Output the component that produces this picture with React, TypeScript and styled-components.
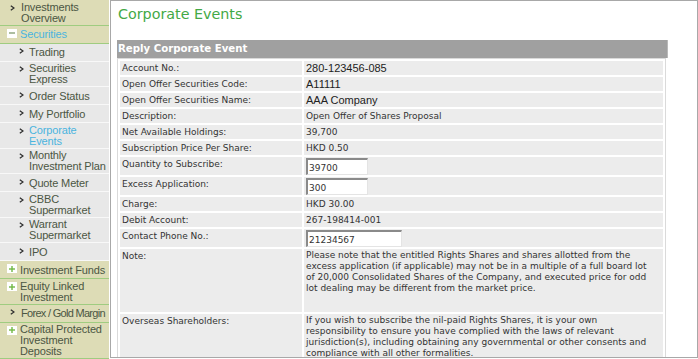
import React from "react";
import styled, { createGlobalStyle, css } from "styled-components";

const Global = createGlobalStyle`
  html, body { margin: 0; padding: 0; background: #fff; }
  body { width: 698px; height: 359px; overflow: hidden; }
`;

const Frame = styled.div`
  display: flex;
  width: 698px;
  height: 359px;
  background: #fff;
  font-family: "DejaVu Sans", Verdana, sans-serif;
`;

const Sidebar = styled.nav`
  width: 109px;
  margin-right: 1px;
  background: #e8e8e8;
  display: flex;
  flex-direction: column;
  overflow: hidden;
`;

type Level = "top" | "sub";
type IconKind = "arrow" | "plus" | "minus";

const NavItem = styled.div<{ $level: Level; $icon: IconKind; $active?: boolean; $tight?: boolean }>`
  display: flex;
  align-items: center;
  min-height: 18px;
  box-sizing: border-box;
  padding: 2px 0 1px;
  font-family: "Liberation Sans", Arial, sans-serif;
  font-size: 11px;
  line-height: 11px;
  color: ${(p) => (p.$active ? "#4ab4df" : "#4b5643")};
  letter-spacing: ${(p) => (p.$tight ? "-0.7px" : "-0.15px")};
  white-space: nowrap;
  ${(p) =>
    p.$level === "top"
      ? css`
          background: #dddcb6;
          border-bottom: 1px solid #9fcc80;
          padding-left: ${p.$icon === "arrow" ? "10px" : "7px"};
        `
      : css`
          background: #e8e8e8;
          border-bottom: 1px solid #f8f8f8;
          padding-left: 19px;
        `}
`;

const IconSlot = styled.span<{ $w: number }>`
  flex: none;
  align-self: flex-start;
  width: ${(p) => p.$w}px;
  height: 11px;
  display: flex;
  align-items: center;
`;

const BoxIcon = styled.span`
  width: 10px;
  height: 9px;
  background: #fff;
  display: flex;
  align-items: center;
  justify-content: center;
`;

const NavText = styled.span`
  display: flex;
  flex-direction: column;
`;

const Main = styled.main`
  flex: 1;
  height: 358px;
  box-sizing: border-box;
  border: 1px solid #a8a8a8;
  padding: 5px 29px 0 6px;
  overflow: hidden;
`;

const Title = styled.h1`
  margin: 0 0 0 1px;
  font-family: "DejaVu Sans", Verdana, sans-serif;
  font-weight: normal;
  font-size: 14.3px;
  line-height: 17px;
  color: #43a946;
`;

const SectionBar = styled.div`
  margin-top: 17px;
  height: 18px;
  background: #a0a0a0;
  border-right: 1px solid #b9b9b9;
  color: #fff;
  font-weight: bold;
  font-size: 10.2px;
  line-height: 18px;
  padding-left: 1px;
  white-space: nowrap;
`;

const Table = styled.table`
  width: 549px;
  border: 1px solid #dadada;
  border-spacing: 2px;
  margin-top: 0;
`;

const LabelCell = styled.td`
  width: 178px;
  background: #ececec;
  vertical-align: top;
  padding: 1px 2px;
  font-size: 9px;
  line-height: 12px;
  color: #333;
  white-space: nowrap;
`;

type ValueKind = "big" | "small" | "field" | "para";

const ValueCell = styled.td<{ $kind: ValueKind; $extra?: number }>`
  background: #ececec;
  vertical-align: top;
  padding: 1px 2px ${(p) => (p.$kind === "field" ? 0 : 1 + (p.$extra ?? 0))}px;
  color: #333;
  white-space: nowrap;
  font-size: 9px;
  line-height: ${(p) => (p.$kind === "para" ? "11px" : "12px")};
  ${(p) =>
    p.$kind === "big" &&
    css`
      font-family: "Liberation Sans", Arial, sans-serif;
      font-size: 11px;
      color: #222;
    `}
`;

const TextInput = styled.input<{ $w: number }>`
  display: block;
  box-sizing: border-box;
  width: ${(p) => p.$w}px;
  height: 17px;
  margin: 0;
  padding: 1px 1px 0;
  font-family: "DejaVu Sans", Verdana, sans-serif;
  font-size: 9px;
  color: #333;
  background: #fff;
  border-style: solid;
  border-width: 2px 1px 1px 2px;
  border-color: #8a8a8a #e4e4e4 #e4e4e4 #8a8a8a;
  outline: none;
`;

const Line = styled.span`
  display: block;
`;

function Arrow() {
  return (
    <svg width="5" height="6" viewBox="0 0 5 6">
      <polyline points="0.8,0.8 4,3 0.8,5.2" fill="none" stroke="#2f2f2f" strokeWidth="1.3" />
    </svg>
  );
}

function Sign({ plus }: { plus: boolean }) {
  return (
    <BoxIcon>
      <svg width="8" height="8" viewBox="0 0 8 8">
        <rect x="1" y="3.3" width="6" height="1.4" fill={plus ? "#6fb845" : "#8aa37a"} />
        {plus && <rect x="3.3" y="1" width="1.4" height="6" fill="#6fb845" />}
      </svg>
    </BoxIcon>
  );
}

type Nav = { level: Level; icon: IconKind; lines: string[]; active?: boolean; tight?: boolean };

const navItems: Nav[] = [
  { level: "top", icon: "arrow", lines: ["Investments", "Overview"] },
  { level: "top", icon: "minus", lines: ["Securities"], active: true },
  { level: "sub", icon: "arrow", lines: ["Trading"] },
  { level: "sub", icon: "arrow", lines: ["Securities", "Express"] },
  { level: "sub", icon: "arrow", lines: ["Order Status"] },
  { level: "sub", icon: "arrow", lines: ["My Portfolio"] },
  { level: "sub", icon: "arrow", lines: ["Corporate", "Events"], active: true },
  { level: "sub", icon: "arrow", lines: ["Monthly", "Investment Plan"] },
  { level: "sub", icon: "arrow", lines: ["Quote Meter"] },
  { level: "sub", icon: "arrow", lines: ["CBBC", "Supermarket"] },
  { level: "sub", icon: "arrow", lines: ["Warrant", "Supermarket"] },
  { level: "sub", icon: "arrow", lines: ["IPO"] },
  { level: "top", icon: "plus", lines: ["Investment Funds"] },
  { level: "top", icon: "plus", lines: ["Equity Linked", "Investment"] },
  { level: "top", icon: "arrow", lines: ["Forex / Gold Margin"], tight: true },
  { level: "top", icon: "plus", lines: ["Capital Protected", "Investment", "Deposits"] },
];

type Row =
  | { label: string; kind: "text"; value: string; big?: boolean }
  | { label: string; kind: "input"; value: string; width: number }
  | { label: string; kind: "para"; lines: string[]; extra: number };

const rows: Row[] = [
  { label: "Account No.:", kind: "text", value: "280-123456-085", big: true },
  { label: "Open Offer Securities Code:", kind: "text", value: "A11111", big: true },
  { label: "Open Offer Securities Name:", kind: "text", value: "AAA Company", big: true },
  { label: "Description:", kind: "text", value: "Open Offer of Shares Proposal" },
  { label: "Net Available Holdings:", kind: "text", value: "39,700" },
  { label: "Subscription Price Per Share:", kind: "text", value: "HKD 0.50" },
  { label: "Quantity to Subscribe:", kind: "input", value: "39700", width: 62 },
  { label: "Excess Application:", kind: "input", value: "300", width: 62 },
  { label: "Charge:", kind: "text", value: "HKD 30.00" },
  { label: "Debit Account:", kind: "text", value: "267-198414-001" },
  { label: "Contact Phone No.:", kind: "input", value: "21234567", width: 96 },
  {
    label: "Note:",
    kind: "para",
    extra: 17,
    lines: [
      "Please note that the entitled Rights Shares and shares allotted from the",
      "excess application (if applicable) may not be in a multiple of a full board lot",
      "of 20,000 Consolidated Shares of the Company, and executed price for odd",
      "lot dealing may be different from the market price.",
    ],
  },
  {
    label: "Overseas Shareholders:",
    kind: "para",
    extra: 4,
    lines: [
      "If you wish to subscribe the nil-paid Rights Shares, it is your own",
      "responsibility to ensure you have complied with the laws of relevant",
      "jurisdiction(s), including obtaining any governmental or other consents and",
      "compliance with all other formalities.",
    ],
  },
];

function renderValue(r: Row) {
  if (r.kind === "input") {
    return (
      <ValueCell $kind="field">
        <TextInput $w={r.width} defaultValue={r.value} />
      </ValueCell>
    );
  }
  if (r.kind === "para") {
    return (
      <ValueCell $kind="para" $extra={r.extra}>
        {r.lines.map((l) => (
          <Line key={l}>{l}</Line>
        ))}
      </ValueCell>
    );
  }
  return <ValueCell $kind={r.big ? "big" : "small"}>{r.value}</ValueCell>;
}

export default function App() {
  return (
    <>
      <Global />
      <Frame>
        <Sidebar>
          {navItems.map((n) => (
            <NavItem
              key={n.lines.join(" ")}
              $level={n.level}
              $icon={n.icon}
              $active={n.active}
              $tight={n.tight}
            >
              <IconSlot $w={n.icon === "arrow" ? (n.level === "top" ? 11 : 10) : 13}>
                {n.icon === "arrow" ? <Arrow /> : <Sign plus={n.icon === "plus"} />}
              </IconSlot>
              <NavText>
                {n.lines.map((l) => (
                  <span key={l}>{l}</span>
                ))}
              </NavText>
            </NavItem>
          ))}
        </Sidebar>
        <Main>
          <Title>Corporate Events</Title>
          <SectionBar>Reply Corporate Event</SectionBar>
          <Table>
            <tbody>
              {rows.map((r) => (
                <tr key={r.label}>
                  <LabelCell>{r.label}</LabelCell>
                  {renderValue(r)}
                </tr>
              ))}
            </tbody>
          </Table>
        </Main>
      </Frame>
    </>
  );
}
